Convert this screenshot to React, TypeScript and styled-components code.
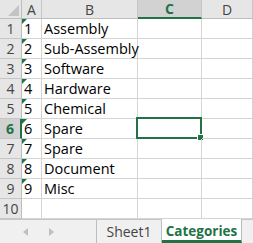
import React from "react";
import styled, { createGlobalStyle, css } from "styled-components";

const Global = createGlobalStyle`
  html, body { margin: 0; padding: 0; background: #ffffff; }
  body { width: 253px; height: 243px; overflow: hidden; font-family: "Open Sans", "Noto Sans", sans-serif; }
`;

const GREEN = "#217346";
const GRID = "#d4d4d4";

const Sheet = styled.div`
  width: 253px;
  height: 243px;
  display: flex;
  flex-direction: column;
  overflow: hidden;
`;

const Grid = styled.div`
  display: grid;
  grid-template-columns: 22px 20px 96px 64px 1fr;
  grid-template-rows: 19px repeat(10, 20px);
  flex: none;
`;

const Corner = styled.div`
  position: relative;
  background: #e6e6e6;
  border-right: 1px solid #bdbdbd;
  border-bottom: 1px solid #bdbdbd;
  &::after {
    content: "";
    position: absolute;
    right: 2px;
    bottom: 2px;
    width: 0;
    height: 0;
    border-left: 11px solid transparent;
    border-bottom: 11px solid #c4c4c4;
  }
`;

const ColHead = styled.div<{ $sel?: boolean }>`
  background: #e6e6e6;
  border-right: 1px solid #c6c6c6;
  border-bottom: 1px solid #bdbdbd;
  display: flex;
  align-items: center;
  justify-content: center;
  font-size: 14px;
  color: #444444;
  ${(p) =>
    p.$sel &&
    css`
      background: #d2d2d2;
      color: ${GREEN};
      font-weight: 700;
      border-bottom: 2px solid ${GREEN};
    `}
`;

const RowHead = styled.div<{ $sel?: boolean }>`
  background: #e6e6e6;
  border-right: 1px solid #bdbdbd;
  border-bottom: 1px solid #c6c6c6;
  display: flex;
  align-items: flex-end;
  justify-content: center;
  font-size: 14px;
  line-height: 19px;
  color: #444444;
  ${(p) =>
    p.$sel &&
    css`
      background: #d2d2d2;
      color: ${GREEN};
      font-weight: 700;
      border-right: 2px solid ${GREEN};
    `}
`;

const Cell = styled.div<{ $flag?: boolean }>`
  position: relative;
  border-right: 1px solid ${GRID};
  border-bottom: 1px solid ${GRID};
  display: flex;
  align-items: flex-end;
  padding: 0 0 0 2px;
  font-size: 14.5px;
  line-height: 19px;
  color: #000000;
  white-space: nowrap;
  ${(p) =>
    p.$flag &&
    css`
      &::before {
        content: "";
        position: absolute;
        left: 0;
        top: 0;
        width: 0;
        height: 0;
        border-top: 5px solid ${GREEN};
        border-right: 5px solid transparent;
      }
    `}
`;

const Selection = styled.div`
  position: absolute;
  left: -2px;
  top: -2px;
  right: -1px;
  bottom: -1px;
  border: 2px solid ${GREEN};
  pointer-events: none;
  &::after {
    content: "";
    position: absolute;
    right: -4px;
    bottom: -4px;
    width: 5px;
    height: 5px;
    background: ${GREEN};
    border: 1px solid #ffffff;
  }
`;

const TabBar = styled.div`
  flex: 1;
  display: flex;
  align-items: stretch;
  background: #f0f0f0;
  border-top: 1px solid #c6c6c6;
`;

const Arrows = styled.div`
  width: 97px;
  display: flex;
  align-items: center;
  padding-left: 23px;
  gap: 21px;
  box-sizing: border-box;
  border-right: 1px solid #bdbdbd;
`;

const Arrow = styled.span`
  display: block;
  width: 0;
  height: 0;
  border-top: 4px solid transparent;
  border-bottom: 4px solid transparent;
`;

const LeftArrow = styled(Arrow)`
  border-right: 5px solid #bfbfbf;
`;

const RightArrow = styled(Arrow)`
  border-left: 5px solid #bfbfbf;
`;

const Tab = styled.div<{ $active?: boolean; $w: number }>`
  width: ${(p) => p.$w}px;
  display: flex;
  align-items: center;
  justify-content: center;
  font-size: 14px;
  color: #444444;
  border-right: 1px solid #bdbdbd;
  box-sizing: border-box;
  ${(p) =>
    p.$active &&
    css`
      background: #ffffff;
      color: ${GREEN};
      font-size: 13.5px;
      font-weight: 700;
      margin-top: -1px;
      border-bottom: 3px solid ${GREEN};
      padding-top: 2px;
    `}
`;

const cols = ["A", "B", "C", "D"];
const items = [
  "Assembly",
  "Sub-Assembly",
  "Software",
  "Hardware",
  "Chemical",
  "Spare",
  "Spare",
  "Document",
  "Misc",
];

export default function App() {
  const rows = Array.from({ length: 10 }, (_, i) => i + 1);
  return (
    <>
      <Global />
      <Sheet>
        <Grid>
          <Corner />
          {cols.map((c) => (
            <ColHead key={c} $sel={c === "C"}>
              {c}
            </ColHead>
          ))}
          {rows.map((r) => {
            const name = items[r - 1];
            return (
              <React.Fragment key={r}>
                <RowHead $sel={r === 6}>{r}</RowHead>
                <Cell $flag={!!name}>{name ? String(r) : ""}</Cell>
                <Cell>{name ?? ""}</Cell>
                <Cell>{r === 6 && <Selection />}</Cell>
                <Cell />
              </React.Fragment>
            );
          })}
        </Grid>
        <TabBar>
          <Arrows>
            <LeftArrow />
            <RightArrow />
          </Arrows>
          <Tab $w={65}>Sheet1</Tab>
          <Tab $active $w={80}>
            Categories
          </Tab>
        </TabBar>
      </Sheet>
    </>
  );
}
